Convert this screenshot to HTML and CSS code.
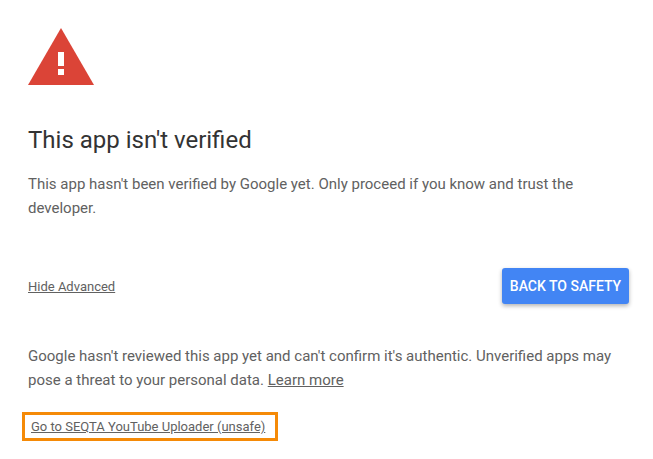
FILE: index.html
```html
<!DOCTYPE html>
<html lang="en">

<head>
    <meta charset="UTF-8">
    <title>This app isn't verified</title>
    <link rel="stylesheet" href="styles.css">
</head>

<body>
    <div class="container">
        <svg class="warning-icon" width="66" height="57" viewBox="0 0 66 57">
            <path d="M33 0 L66 57 L0 57 Z" fill="#db4437" />
            <rect x="30" y="24" width="6" height="14" fill="#fff" />
            <rect x="30" y="41" width="6" height="6" fill="#fff" />
        </svg>
        <h1>This app isn't verified</h1>
        <p class="message">This app hasn't been verified by Google yet. Only proceed if you know and trust the developer.</p>
        <div class="actions">
            <a class="small-link" href="#">Hide Advanced</a>
            <button class="safety-btn">BACK TO SAFETY</button>
        </div>
        <p class="details">Google hasn't reviewed this app yet and can't confirm it's authentic. Unverified apps may pose a threat to your personal data. <a href="#">Learn more</a></p>
        <div class="unsafe-box">
            <a class="small-link" href="#">Go to SEQTA YouTube Uploader (unsafe)</a>
        </div>
    </div>
</body>

</html>
```
FILE: styles.css
```css
* {
    margin: 0;
    padding: 0;
    box-sizing: border-box;
}

body {
    font-family: 'Roboto', sans-serif;
    background: #fff;
    color: #616161;
    overflow: hidden;
}

.container {
    padding: 28px 24px 0 28px;
}

.warning-icon {
    display: block;
}

h1 {
    color: #333;
    font-weight: 400;
    font-size: 24px;
    line-height: 32px;
    margin-top: 39px;
}

.message {
    font-size: 15px;
    line-height: 24px;
    margin-top: 16px;
}

.actions {
    display: flex;
    align-items: center;
    justify-content: space-between;
    margin-top: 48px;
}

.small-link {
    font-size: 13px;
    color: #616161;
}

.safety-btn {
    width: 127px;
    height: 36px;
    border: none;
    border-radius: 3px;
    background: #4285f4;
    color: #fff;
    font-family: 'Roboto', sans-serif;
    font-size: 14px;
    font-weight: 500;
    box-shadow: 0 2px 4px rgba(0, 0, 0, 0.3);
}

.details {
    font-size: 15px;
    line-height: 24px;
    margin-top: 40px;
}

.details a {
    color: #616161;
}

.unsafe-box {
    width: 256px;
    height: 29px;
    margin: 20px 0 0 -6px;
    padding-left: 6px;
    border: 3px solid #f58a07;
    display: flex;
    align-items: center;
}
```
